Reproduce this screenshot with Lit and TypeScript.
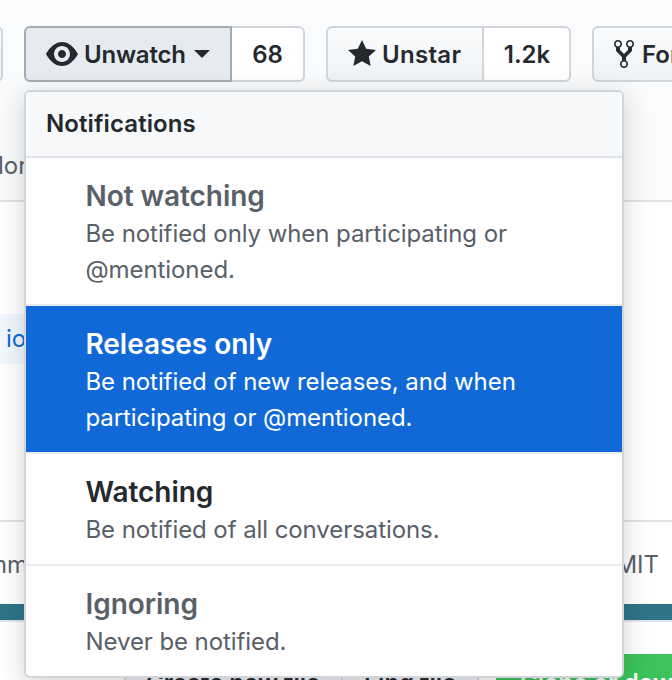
import { LitElement, html, css, svg } from "lit";
import { customElement } from "lit/decorators.js";

const eye = svg`<path fill-rule="evenodd" d="M8.06 2C3 2 0 8 0 8s3 6 8.06 6C13 14 16 8 16 8s-3-6-7.94-6zM8 12c-2.2 0-4-1.78-4-4 0-2.2 1.8-4 4-4 2.22 0 4 1.8 4 4 0 2.22-1.78 4-4 4zm2-4c0 1.11-.89 2-2 2-1.11 0-2-.89-2-2 0-1.11.89-2 2-2 1.11 0 2 .89 2 2z"/>`;
const star = svg`<path fill-rule="evenodd" d="M14 6l-4.9-.64L7 1 4.9 5.36 0 6l3.6 3.26L2.67 14 7 11.67 11.33 14l-.93-4.74L14 6z"/>`;
const fork = svg`<path fill-rule="evenodd" d="M8 1a1.993 1.993 0 00-1 3.72V6L5 8 3 6V4.72A1.993 1.993 0 002 1a1.993 1.993 0 00-1 3.72V6.5l3 3v1.78A1.993 1.993 0 005 15a1.993 1.993 0 001-3.72V9.5l3-3V4.72A1.993 1.993 0 008 1zM2 4.2C1.34 4.2.8 3.65.8 3c0-.65.55-1.2 1.2-1.2.65 0 1.2.55 1.2 1.2 0 .65-.55 1.2-1.2 1.2zm3 10c-.66 0-1.2-.55-1.2-1.2 0-.65.55-1.2 1.2-1.2.65 0 1.2.55 1.2 1.2 0 .65-.55 1.2-1.2 1.2zm3-10c-.66 0-1.2-.55-1.2-1.2 0-.65.55-1.2 1.2-1.2.65 0 1.2.55 1.2 1.2 0 .65-.55 1.2-1.2 1.2z"/>`;

@customElement("app-root")
export class AppRoot extends LitElement {
  static styles = css`
    :host {
      display: block;
      position: relative;
      width: 672px;
      height: 680px;
      overflow: hidden;
      background: #fff;
      font-family: Inter, "Liberation Sans", sans-serif;
      color: #24292e;
      font-size: 24px;
    }
    .head {
      height: 200px;
      background: #fafbfc;
      border-bottom: 2px solid #e1e4e8;
      overflow: hidden;
    }
    .actions {
      display: flex;
      gap: 21px;
      padding-top: 26px;
      margin-left: -97px;
      width: 900px;
    }
    .group { display: flex; height: 56px; font-weight: 600; }
    .btn, .count {
      display: flex;
      align-items: center;
      box-sizing: border-box;
      height: 56px;
      border: 2px solid #d1d5da;
      white-space: nowrap;
    }
    .btn {
      border-radius: 6px 0 0 6px;
      background: linear-gradient(#fafbfc, #eff3f6);
    }
    .btn.solo { border-radius: 6px; width: 100px; }
    .btn svg { fill: #24292e; flex: none; }
    .btn.pressed {
      background: #e6ebf1;
      border-color: #a8acb1;
      width: 208px;
      padding-left: 20px;
      gap: 6px;
      letter-spacing: -0.2px;
    }
    .btn.star { width: 158px; padding-left: 20px; gap: 6px; letter-spacing: 0.3px; }
    .btn.fork { width: 200px; padding-left: 20px; border-radius: 6px; gap: 8px; }
    .caret {
      width: 0;
      height: 0;
      border: 8px solid transparent;
      border-top-color: #24292e;
      border-bottom-width: 0;
      margin-left: 2px;
    }
    .count {
      justify-content: center;
      background: #fff;
      border-left-width: 0;
      border-radius: 0 6px 6px 0;
    }
    .count.c1 { width: 73px; }
    .count.c2 { width: 87px; padding-left: 1px; }
    .tabtext { margin-top: 66px; color: #586069; line-height: 36px; margin-left: -2px; }
    .body { height: 318px; box-sizing: border-box; padding-top: 112px; }
    .chip {
      width: 26px;
      height: 50px;
      background: #f1f8ff;
      color: #1169d8;
      line-height: 50px;
      padding-left: 6px;
      box-sizing: border-box;
      overflow: hidden;
    }
    .stats {
      height: 84px;
      box-sizing: border-box;
      border-top: 2px solid #e1e4e8;
      display: flex;
      justify-content: space-between;
      align-items: flex-start;
      color: #586069;
      padding: 25px 13px 0 0;
      line-height: 36px;
    }
    .stats span:first-child { margin-left: -14px; }
    .bar { height: 16px; background: #2e7489; }
    .tools {
      border-top: 2px solid #e1e4e8;
      padding-top: 32px;
      display: flex;
      font-weight: 600;
    }
    .tool {
      flex: none;
      height: 56px;
      box-sizing: border-box;
      border: 2px solid #d1d5da;
      background: #eff3f6;
      color: #24292e;
      white-space: nowrap;
      padding-top: 12px;
      border-radius: 6px;
      overflow: hidden;
    }
    .t1 { margin-left: 124px; width: 219px; padding-left: 20px; border-radius: 6px 0 0 6px; }
    .t2 { width: 136px; padding-left: 21px; border-left: 0; border-radius: 0 6px 6px 0; }
    .t3 { margin-left: 17px; width: 300px; padding-left: 22px; color: #fff; background: #3cc35b; border-color: #3cc35b; }
    .menu {
      position: absolute;
      left: 24px;
      top: 90px;
      width: 600px;
      height: 588px;
      box-sizing: border-box;
      background: #fff;
      border: 2px solid #d1d5da;
      border-radius: 6px;
      box-shadow: 0 6px 26px rgba(27, 31, 35, 0.2);
      overflow: hidden;
    }
    .menu-head {
      height: 66px;
      box-sizing: border-box;
      background: #f6f8fa;
      border-bottom: 2px solid #e1e4e8;
      padding-left: 20px;
      line-height: 64px;
      font-weight: 600;
      letter-spacing: 0.1px;
    }
    .item {
      padding: 19px 20px 16px 59.5px;
      line-height: 36px;
      color: #586069;
      letter-spacing: -0.08px;
      border-bottom: 2px solid #e8eaed;
    }
    .item:last-child { border-bottom: 0; }
    .item b { display: block; font-size: 28px; line-height: 39px; font-weight: 600; letter-spacing: -0.05px; }
    .item.sel { background: #1169d8; color: #fff; background-clip: padding-box; }
    .item.dark b { color: #24292e; }
  `;

  render() {
    const items = [
      { t: "Not watching", d: "Be notified only when participating or @mentioned.", c: "" },
      { t: "Releases only", d: "Be notified of new releases, and when participating or @mentioned.", c: "sel" },
      { t: "Watching", d: "Be notified of all conversations.", c: "dark" },
      { t: "Ignoring", d: "Never be notified.", c: "" },
    ];
    return html`
      <div class="head">
        <div class="actions">
          <div class="group"><div class="btn solo"></div></div>
          <div class="group">
            <div class="btn pressed">
              <svg width="32" height="32" viewBox="0 0 16 16">${eye}</svg>
              <span>Unwatch</span><i class="caret"></i>
            </div>
            <div class="count c1">68</div>
          </div>
          <div class="group">
            <div class="btn star">
              <svg width="28" height="32" viewBox="0 0 14 16">${star}</svg>
              <span>Unstar</span>
            </div>
            <div class="count c2">1.2k</div>
          </div>
          <div class="group">
            <div class="btn fork">
              <svg width="20" height="32" viewBox="0 0 10 16">${fork}</svg>
              <span>Fork</span>
            </div>
          </div>
        </div>
        <div class="tabtext">lor</div>
      </div>
      <div class="body"><div class="chip">ios</div></div>
      <div class="stats"><span>mm</span><span>MIT</span></div>
      <div class="bar"></div>
      <div class="tools">
        <div class="tool t1">Create new file</div>
        <div class="tool t2">Find file</div>
        <div class="tool t3">Clone or download</div>
      </div>
      <div class="menu">
        <div class="menu-head">Notifications</div>
        ${items.map(
          (i) => html`<div class="item ${i.c}"><b>${i.t}</b>${i.d}</div>`
        )}
      </div>
    `;
  }
}
